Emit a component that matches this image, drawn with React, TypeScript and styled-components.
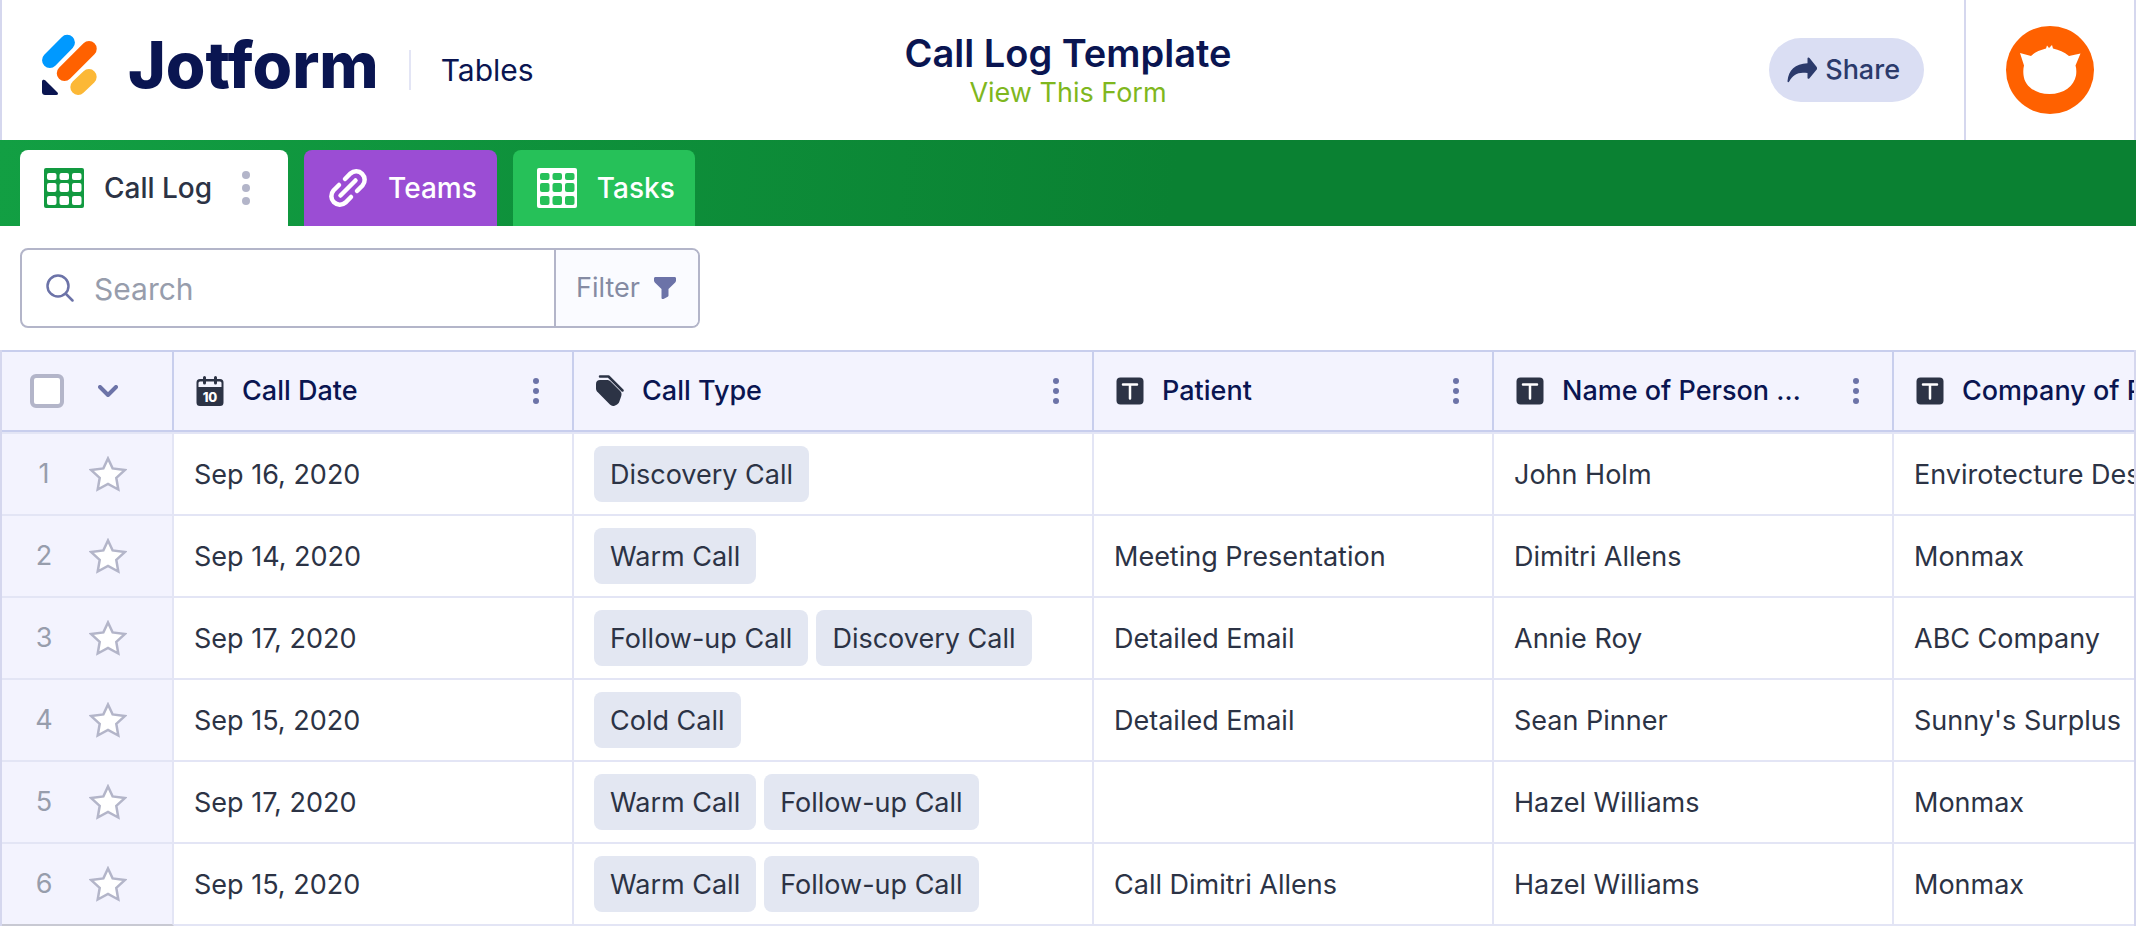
import React from "react";
import styled, { createGlobalStyle, css } from "styled-components";

const GlobalStyle = createGlobalStyle`
  *, *::before, *::after { box-sizing: border-box; }
  body {
    margin: 0;
    background: #ffffff;
    color: #2c3345;
    font-family: Inter, "Liberation Sans", sans-serif;
    font-size: 27px;
    line-height: 32px;
  }
  button, input { font: inherit; color: inherit; }
  button { border: 0; padding: 0; background: none; cursor: pointer; }
  svg { display: block; flex: none; }
`;

const Page = styled.div`
  overflow: hidden;
`;

const Header = styled.header`
  display: grid;
  grid-template-columns: 1fr auto 1fr;
  height: 140px;
  border: solid #d5d7ee;
  border-width: 0 2px;
`;

const Brand = styled.a`
  display: flex;
  align-items: center;
  padding-left: 38px;
  color: #0a1551;
  text-decoration: none;
`;

const Logo = styled.span`
  display: flex;
  align-items: center;
  gap: 28px;
  padding-bottom: 10px;
`;

const BrandName = styled.span`
  font-size: 64px;
  line-height: 64px;
  font-weight: 800;
  font-variant-ligatures: none;
  font-feature-settings: "calt" 0, "liga" 0;
`;

const Product = styled.span`
  display: flex;
  align-items: center;
  height: 40px;
  margin-left: 30px;
  padding-left: 30px;
  border-left: 2px solid #e3e5f5;
  font-size: 30px;
`;

const TitleBlock = styled.div`
  display: flex;
  flex-direction: column;
  align-items: center;
  padding-top: 32px;
`;

const Title = styled.h1`
  margin: 0;
  color: #0a1551;
  font-size: 38px;
  line-height: 42px;
  font-weight: 600;
`;

const FormLink = styled.a`
  color: #7fb71e;
  line-height: 38px;
  text-decoration: none;
`;

const HeaderActions = styled.div`
  display: flex;
  align-items: center;
  justify-content: flex-end;
`;

const ShareButton = styled.button`
  display: flex;
  align-items: center;
  gap: 8px;
  height: 64px;
  margin-right: 40px;
  padding: 0 24px 0 18px;
  border-radius: 32px;
  background: #dadef3;
  color: #2b3a6b;
  font-weight: 500;
`;

const Account = styled.button`
  display: flex;
  align-items: center;
  justify-content: center;
  align-self: stretch;
  width: 170px;
  border-left: 2px solid #d5d7ee;
`;

const TabBar = styled.nav`
  display: flex;
  align-items: flex-end;
  gap: 16px;
  height: 86px;
  padding: 0 20px;
  background: linear-gradient(95deg, #129f43 0%, #0a8132 55%);
`;

const tones = {
  active: css`background: #ffffff; color: #2c3345; padding-right: 26px;`,
  purple: css`background: #9b4dd4; color: #ffffff;`,
  green: css`background: #26c159; color: #ffffff;`,
};

const Tab = styled.div<{ $tone: keyof typeof tones }>`
  display: flex;
  align-items: center;
  gap: 18px;
  height: 76px;
  padding: 0 20px 0 24px;
  border-radius: 8px 8px 0 0;
  ${(p) => tones[p.$tone]}
`;

const TabButton = styled.button`
  display: flex;
  align-items: center;
  gap: 20px;
  font-size: 28px;
  font-weight: 500;
`;

const MenuButton = styled.button`
  display: flex;
  align-items: center;
  justify-content: center;
  flex: none;
  width: 32px;
  height: 48px;
`;

const Toolbar = styled.div`
  display: flex;
  padding: 22px 20px;
`;

const SearchGroup = styled.div`
  display: flex;
  width: 680px;
  height: 80px;
  border: 2px solid #b3b5c9;
  border-radius: 8px;
  overflow: hidden;
`;

const SearchField = styled.label`
  display: flex;
  align-items: center;
  flex: 1;
  gap: 20px;
  min-width: 0;
  padding-left: 24px;
`;

const SearchInput = styled.input`
  flex: 1;
  min-width: 0;
  border: 0;
  outline: 0;
  padding: 2px 0 0;
  font-size: 30px;
  line-height: 36px;
  background: transparent;
  &::placeholder { color: #979dac; opacity: 1; }
`;

const FilterButton = styled.button`
  display: flex;
  align-items: center;
  justify-content: space-between;
  width: 144px;
  padding: 0 22px 0 20px;
  border-left: 2px solid #b3b5c9;
  background: #fafbff;
  color: #858ba3;
`;

const TableFrame = styled.main`
  border: solid #d5d7ee;
  border-width: 0 2px;
  overflow: hidden;
`;

const Grid = styled.table`
  width: 2292px;
  table-layout: fixed;
  border-collapse: separate;
  border-spacing: 0;
`;

const HeadCell = styled.th`
  height: 82px;
  padding: 0 20px 0 22px;
  border: solid #c8ceed;
  border-width: 2px 2px 2px 0;
  background: #f3f3fe;
  color: #0a1551;
  font-weight: 500;
  text-align: left;
`;

const HeadContent = styled.div`
  display: flex;
  align-items: center;
  gap: 18px;
`;

const HeadLabel = styled.span`
  flex: 1;
  min-width: 0;
  overflow: hidden;
  white-space: nowrap;
  text-overflow: ellipsis;
`;

const SelectContent = styled.div`
  display: flex;
  align-items: center;
  gap: 34px;
  padding-left: 6px;
`;

const Checkbox = styled.input`
  appearance: none;
  width: 34px;
  height: 34px;
  margin: 0;
  border: 4px solid #b3b5c9;
  border-radius: 6px;
  background: #ffffff;
`;

const Row = styled.tr`
  &:first-child > * { border-top: 2px solid #e3e5f5; height: 84px; }
  &:last-child > th { border-bottom-color: #c8c9d3; }
`;

const Cell = styled.td`
  height: 82px;
  padding: 2px 20px 0;
  border: solid #e3e5f5;
  border-width: 0 2px 2px 0;
  white-space: nowrap;
  overflow: hidden;
`;

const TagCell = styled(Cell)`
  padding: 0 20px;
`;

const RowHead = styled(Cell).attrs({ as: "th", scope: "row" })`
  padding: 0;
  background: #f3f3fe;
  color: #979dac;
  font-weight: 400;
`;

const RowHeadContent = styled.div`
  display: grid;
  grid-template-columns: 84px 44px;
  align-items: center;
  justify-items: center;
`;

const Tags = styled.div`
  display: flex;
  gap: 8px;
`;

const Tag = styled.span`
  display: flex;
  align-items: center;
  height: 56px;
  padding: 2px 16px 0;
  border-radius: 8px;
  background: #e3e7f2;
`;

const LogoMark = () => (
  <svg width="60" height="64" viewBox="40 32 60 64" aria-hidden="true">
    <g strokeLinecap="round" fill="none" strokeWidth="15.500">
      <path d="M49.800 59.200L67.200 41.600" stroke="#0099ff" />
      <path d="M64.500 72.200L89 47.800" stroke="#ff6100" />
      <path d="M78.100 86.200L88.900 75.800" stroke="#fcb836" />
    </g>
    <path d="M42 80.500c0-1.800 2-2.300 3.200-1.200l12.300 12.200c1 1 .4 2.500-1.200 2.500H45c-1.700 0-3-1.300-3-3z" fill="#0a1551" />
  </svg>
);

const ShareIcon = () => (
  <svg width="30" height="26" viewBox="0 0 30 26" aria-hidden="true">
    <path d="M20.500 1.500c0-1.200 1.200-1.500 2-.6l7 8.900c.8 1 .8 2 0 3l-7 8.500c-.8 1-2 .6-2-.6v-4.600C12 14.500 6 17 2.200 24.500c-.5 1.200-1.800.8-1.700-.4C1.500 13.500 8 6.500 20.500 6.300z" fill="#2b3a6b" />
  </svg>
);

const AvatarIcon = () => (
  <svg width="88" height="88" viewBox="0 0 88 88" aria-hidden="true">
    <circle cx="44" cy="44" r="44" fill="#ff6100" />
    <path d="M14 27l11 3c4-4 9-6 15-7.500l1-3 2 2.500 3-3 1 3.500c6 1.500 11 3.500 16 7.500l11.500-2.500-5 12c1 3 1 7 .5 10C68 60 58 68 43.500 68S18.500 60 17.500 49c-.4-4-.2-7 .5-9.500z" fill="#fff" />
  </svg>
);

const TableIcon = ({ color, hole }: { color: string; hole: string }) => (
  <svg width="40" height="40" viewBox="0 0 40 40" aria-hidden="true">
    <rect width="40" height="40" rx="2" fill={color} />
    {[5, 15, 28].map((y, r) =>
      [3, 15.500, 28].map((x) => (
        <rect key={`${x}-${y}`} x={x} y={y} width="9.500" height={r === 0 ? 7 : 9} rx="2" fill={hole} />
      ))
    )}
  </svg>
);

const LinkIcon = () => (
  <svg width="40" height="40" viewBox="0 0 40 40" fill="none" stroke="#fff" strokeWidth="4.500" strokeLinecap="round" aria-hidden="true">
    <path d="M12.500 27.500L27.500 12.500" />
    <path d="M17 11l5.500-5.500a8.500 8.500 0 0 1 12 12L29 23" />
    <path d="M11 17l-5.500 5.500a8.500 8.500 0 0 0 12 12L23 29" />
  </svg>
);

const Dots = ({ color, r, gap }: { color: string; r: number; gap: number }) => (
  <svg width="10" height={gap * 2 + r * 2 + 2} viewBox={`-5 ${-gap - r - 1} 10 ${gap * 2 + r * 2 + 2}`} fill={color} aria-hidden="true">
    <circle cy={-gap} r={r} />
    <circle r={r} />
    <circle cy={gap} r={r} />
  </svg>
);

const SearchIcon = () => (
  <svg width="28" height="28" viewBox="0 0 28 28" fill="none" stroke="#6c73a8" strokeWidth="2.500" strokeLinecap="round" aria-hidden="true">
    <circle cx="12" cy="12" r="10.500" />
    <path d="M20 20l6.500 6.500" />
  </svg>
);

const FilterIcon = () => (
  <svg width="22" height="22" viewBox="0 0 22 22" aria-hidden="true">
    <path d="M1.500 0h19c1 0 1.500.7 1.500 1.500v2c0 .8-.3 1.400-.8 2L14.500 12v6.500c0 .6-.3 1-.8 1.300L9.500 22c-1 .5-2 0-2-1.200V12L.8 5.500C.3 5 0 4.300 0 3.500v-2C0 .7.600 0 1.500 0z" fill="#6c73a8" />
  </svg>
);

const ChevronIcon = () => (
  <svg width="20" height="12" viewBox="0 0 20 12" fill="none" stroke="#6c73a8" strokeWidth="4" strokeLinecap="round" strokeLinejoin="round" aria-hidden="true">
    <path d="M2 2l8 8 8-8" />
  </svg>
);

const DateIcon = () => (
  <svg width="28" height="30" viewBox="0 0 28 30" aria-hidden="true">
    <path d="M4 3h20a3.500 3.500 0 0 1 3.500 3.500v20a3.500 3.500 0 0 1-3.500 3.500H4A3.500 3.500 0 0 1 .5 26.500v-20A3.500 3.500 0 0 1 4 3z" fill="#2c3345" />
    <path d="M2.500 7a1.500 1.500 0 0 1 1.500-1.500h20A1.500 1.500 0 0 1 25.500 7v4h-23z" fill="#f3f3fe" />
    <path d="M8.500 1.500V7M19.500 1.500V7" stroke="#2c3345" strokeWidth="3" strokeLinecap="round" />
    <text x="14" y="25.500" textAnchor="middle" fontSize="13" fontWeight="800" fill="#fff">10</text>
  </svg>
);

const TagIcon = () => (
  <svg width="28" height="32" viewBox="0 0 28 32" aria-hidden="true">
    <path d="M4 5h7c1.500 0 2.600.5 3.600 1.500l9.300 9.300c1.800 1.800 2 3.200 1.300 5.500l-1.900 5.500c-.4 1.200-1 2-2.200 2.600l-2 1c-2 1-3.600.7-5.200-.9L1.800 17.300C.6 16.200 0 15 0 13.500V9c0-2.500 1.500-4 4-4z" fill="#2c3345" />
    <path d="M4 1.500h8.500L26.500 15.500" fill="none" stroke="#2c3345" strokeWidth="2.500" strokeLinecap="round" strokeLinejoin="round" />
  </svg>
);

const TextIcon = () => (
  <svg width="28" height="28" viewBox="0 0 28 28" aria-hidden="true">
    <rect x="0.500" y="0.500" width="27" height="27" rx="4" fill="#2c3345" />
    <path d="M7 7.500h14M14 7.500v14" stroke="#fff" strokeWidth="2.500" strokeLinecap="round" fill="none" />
  </svg>
);

const StarIcon = () => (
  <svg width="38" height="36" viewBox="0 0 38 36" aria-hidden="true">
    <path d="M19 2.500l4.600 9.900 12.400 1.500-8.700 8 2 11.600L19 28 8.700 33.500l2-11.600-8.700-8 12.400-1.500z" fill="#fff" stroke="#b3b5c9" strokeWidth="2.500" />
  </svg>
);

type Column = { label: string; width: number; Icon: () => React.ReactElement };

const columns: Column[] = [
  { label: "Call Date", width: 400, Icon: DateIcon },
  { label: "Call Type", width: 520, Icon: TagIcon },
  { label: "Patient", width: 400, Icon: TextIcon },
  { label: "Name of Person …", width: 400, Icon: TextIcon },
  { label: "Company of Person", width: 400, Icon: TextIcon },
];

type Call = { date: string; types: string[]; patient: string; person: string; company: string };

const calls: Call[] = [
  { date: "Sep 16, 2020", types: ["Discovery Call"], patient: "", person: "John Holm", company: "Envirotecture Design" },
  { date: "Sep 14, 2020", types: ["Warm Call"], patient: "Meeting Presentation", person: "Dimitri Allens", company: "Monmax" },
  { date: "Sep 17, 2020", types: ["Follow-up Call", "Discovery Call"], patient: "Detailed Email", person: "Annie Roy", company: "ABC Company" },
  { date: "Sep 15, 2020", types: ["Cold Call"], patient: "Detailed Email", person: "Sean Pinner", company: "Sunny's Surplus" },
  { date: "Sep 17, 2020", types: ["Warm Call", "Follow-up Call"], patient: "", person: "Hazel Williams", company: "Monmax" },
  { date: "Sep 15, 2020", types: ["Warm Call", "Follow-up Call"], patient: "Call Dimitri Allens", person: "Hazel Williams", company: "Monmax" },
];

export default function App() {
  return (
    <Page>
      <GlobalStyle />
      <Header>
        <Brand href="#">
          <Logo>
            <LogoMark />
            <BrandName>Jotform</BrandName>
          </Logo>
          <Product>Tables</Product>
        </Brand>
        <TitleBlock>
          <Title>Call Log Template</Title>
          <FormLink href="#">View This Form</FormLink>
        </TitleBlock>
        <HeaderActions>
          <ShareButton type="button">
            <ShareIcon />
            Share
          </ShareButton>
          <Account type="button" aria-label="Account">
            <AvatarIcon />
          </Account>
        </HeaderActions>
      </Header>

      <TabBar>
        <Tab $tone="active">
          <TabButton type="button">
            <TableIcon color="#129a40" hole="#ffffff" />
            Call Log
          </TabButton>
          <MenuButton type="button" aria-label="Call Log menu">
            <Dots color="#b3b5c9" r={4} gap={13} />
          </MenuButton>
        </Tab>
        <Tab $tone="purple">
          <TabButton type="button">
            <LinkIcon />
            Teams
          </TabButton>
        </Tab>
        <Tab $tone="green">
          <TabButton type="button">
            <TableIcon color="#ffffff" hole="#26c159" />
            Tasks
          </TabButton>
        </Tab>
      </TabBar>

      <Toolbar>
        <SearchGroup>
          <SearchField>
            <SearchIcon />
            <SearchInput type="search" placeholder="Search" aria-label="Search" />
          </SearchField>
          <FilterButton type="button">
            Filter
            <FilterIcon />
          </FilterButton>
        </SearchGroup>
      </Toolbar>

      <TableFrame>
        <Grid>
          <colgroup>
            <col width={172} />
            {columns.map((c) => (
              <col key={c.label} width={c.width} />
            ))}
          </colgroup>
          <thead>
            <tr>
              <HeadCell scope="col">
                <SelectContent>
                  <Checkbox type="checkbox" aria-label="Select all rows" />
                  <button type="button" aria-label="Selection options">
                    <ChevronIcon />
                  </button>
                </SelectContent>
              </HeadCell>
              {columns.map(({ label, Icon }) => (
                <HeadCell key={label} scope="col">
                  <HeadContent>
                    <Icon />
                    <HeadLabel>{label}</HeadLabel>
                    <MenuButton type="button" aria-label={`${label} menu`}>
                      <Dots color="#6c73a8" r={3} gap={10} />
                    </MenuButton>
                  </HeadContent>
                </HeadCell>
              ))}
            </tr>
          </thead>
          <tbody>
            {calls.map((call, i) => (
              <Row key={i}>
                <RowHead>
                  <RowHeadContent>
                    {i + 1}
                    <button type="button" aria-label={`Star row ${i + 1}`}>
                      <StarIcon />
                    </button>
                  </RowHeadContent>
                </RowHead>
                <Cell>{call.date}</Cell>
                <TagCell>
                  <Tags>
                    {call.types.map((t) => (
                      <Tag key={t}>{t}</Tag>
                    ))}
                  </Tags>
                </TagCell>
                <Cell>{call.patient}</Cell>
                <Cell>{call.person}</Cell>
                <Cell>{call.company}</Cell>
              </Row>
            ))}
          </tbody>
        </Grid>
      </TableFrame>
    </Page>
  );
}
